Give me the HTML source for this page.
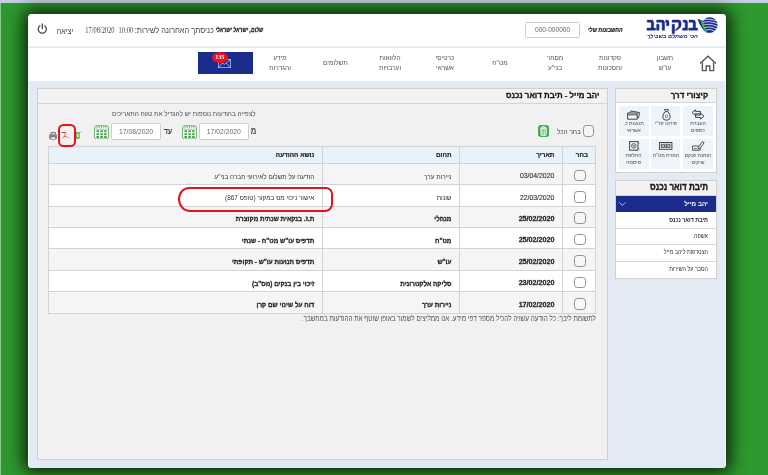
<!DOCTYPE html>
<html lang="he">
<head>
<meta charset="utf-8">
<title>יהב מייל</title>
<style>
*{box-sizing:border-box;margin:0;padding:0}
html,body{width:768px;height:475px;overflow:hidden}
body{background:#2e992e;font-family:"Liberation Sans",sans-serif;color:#333;position:relative}
.abs{position:absolute}
.topstrip{left:0;top:0;width:768px;height:3px;background:#c5d0e2}
.cardbg{left:28.4px;top:13.6px;width:697.2px;height:454.5px;background:#f3f6fa;border-radius:3.5px;box-shadow:0 0 17px 3.6px rgba(0,0,0,.84)}
.edge{left:0;top:3px;width:1px;height:472px;background:rgba(255,255,255,.45)}
.card{left:29px;top:14px;width:696px;height:453.6px;background:#e4eaf3;border-radius:3px;overflow:hidden;will-change:transform}
.hdr{left:0;top:0;width:696px;height:33px;background:#fff;border-bottom:1px solid #ecf1f7}
.nav{left:0;top:34px;width:696px;height:32.6px;background:#fff}
.t{position:absolute;white-space:nowrap;line-height:1}
.r{direction:rtl;text-align:right}
.c{text-align:center}
.navi{position:absolute;top:38.8px;font-size:6.5px;line-height:9.9px;color:#555;text-align:center;direction:rtl;width:60px;margin-left:-30px}
.panel{position:absolute;background:#f1f1f1;border:1px solid #cfcfcf}
.ptitle{position:absolute;left:0;top:0;right:0;height:14.3px;border-bottom:1px solid #d4d4d4;background:#f2f2f2;font-weight:bold;font-size:7.9px;line-height:14.2px;direction:rtl;text-align:right;padding-right:7.6px;color:#1a1a1a;-webkit-text-stroke:0.33px #1a1a1a}
.tile{position:absolute;background:#edf5fa;width:30px;height:30px}
.tile span{position:absolute;left:-4px;right:-4px;top:13.7px;font-size:5.14px;line-height:7px;color:#505050;text-align:center;direction:rtl}
.mrow{position:absolute;left:0;right:0;height:16.8px;background:#fff;border-top:1px solid #d8d8d8;font-size:5.4px;line-height:15px;direction:rtl;text-align:right;padding-right:7.7px;color:#2c2c2c}
table.tb{position:absolute;border-collapse:collapse;direction:rtl;table-layout:fixed}
.tb td,.tb th{border:1px solid #d3d3d3;font-size:6.38px;color:#333;text-align:right;padding:5.6px 7.5px 0 0;vertical-align:middle;white-space:nowrap;overflow:hidden;line-height:1}
.tb td.d{font-size:6.9px;color:#333;-webkit-text-stroke:0.12px #333}
.tb td.c,.tb th.c{padding:2.8px 0 0 2.4px;text-align:center}
.tb th{background:#e9f2f9;height:16.6px;font-weight:bold;color:#222;-webkit-text-stroke:0.2px #222;font-size:6.38px;padding-top:0.4px}
.tb td{height:21.4px}
.tb td.d .s{transform:none}
.s{display:inline-block;transform:scaleY(1.15);transform-origin:50% 55%}
.tb tr.g td{background:#f5f5f5}
.tb tr.w td{background:#fff}
.tb tr.b td{font-weight:bold;-webkit-text-stroke:0.28px #2a2a2a;font-size:6.36px;color:#2a2a2a}
.tb tr.b td.d{font-size:7.15px}
.cb{display:inline-block;width:11.6px;height:11.6px;border:1px solid #909090;border-radius:3.4px;background:rgba(255,255,255,.25);vertical-align:middle}
.inp{position:absolute;background:#fff;border:1px solid #cdcdcd;border-radius:1.5px;font-size:6.8px;color:#6a6a6a;text-align:center;line-height:15px;height:16px}
</style>
</head>
<body>
<div class="abs topstrip"></div>
<div class="abs edge"></div>
<div class="abs cardbg"></div>
<div class="abs card">
  <!-- header -->
  <div class="abs hdr"></div>
  <div class="abs nav"></div>

  <!-- logo -->
  <svg class="abs" style="left:617px;top:2px" width="73" height="26" viewBox="0 0 73 26">
    <g fill="#1b2c8c" stroke="#1b2c8c" stroke-width="0.4" stroke-linejoin="round" transform="translate(0.9,4)">
      <!-- bet (left, last letter) -->
      <path d="M0.3,0 H4.4 Q6.8,0 6.8,2.4 V8 H8.6 V10.3 H0 V8 H4.3 V3 Q4.3,2.3 3.6,2.3 H0.3 Z"/>
      <!-- he -->
      <g transform="translate(9.7,0)"><path d="M0,0 H5.6 Q8,0 8,2.4 V10.3 H5.5 V3 Q5.5,2.3 4.8,2.3 H0 Z"/><path d="M0,4.3 H2.5 V10.3 H0 Z"/></g>
      <!-- yod -->
      <g transform="translate(18.8,0)"><path d="M0,0 H1.2 Q3.3,0 3.3,2.1 V5.7 H0.8 V2.9 Q0.8,2.3 0.2,2.3 H0 Z"/></g>
      <!-- qof -->
      <g transform="translate(25.2,0)"><path d="M0,0 H6.6 Q9,0 9,2.4 V5.4 Q9,7.2 7.6,8 L4.6,10.3 H2.9 L6,6.9 Q6.5,6.4 6.5,5.6 V3 Q6.5,2.3 5.8,2.3 H0 Z"/><path d="M0,4.3 H2.5 V13.6 H0 Z"/></g>
      <!-- nun -->
      <g transform="translate(35.7,0)"><path d="M0.5,0 H2.7 Q5,0 5,2.3 V10.3 H0 V8 H2.5 V2.9 Q2.5,2.3 1.9,2.3 H0.5 Z"/></g>
      <!-- bet -->
      <g transform="translate(41.8,0)"><path d="M0.3,0 H4.5 Q6.9,0 6.9,2.4 V8 H8.9 V10.3 H0 V8 H4.4 V3 Q4.4,2.3 3.7,2.3 H0.3 Z"/></g>
    </g>
    <!-- globe -->
    <g>
      <circle cx="63.7" cy="9.1" r="7.8" fill="#1b2c8c"/>
      <path d="M51.5 2.7 L59 5.4 L61.6 17 Q54.6 13 51.5 2.7Z" fill="#1b2c8c"/>
      <path d="M54.2 3.8 L57 4.9 Q57.8 11 61.6 16.8 L59.2 15.9 Q55.4 10.6 54.2 3.8Z" fill="#35ad4e"/>
      <g stroke="#fff" stroke-width="0.75" fill="none">
        <path d="M56.6 4.2 Q62 2 70 4.8"/>
        <path d="M57 6.6 Q62.6 4.4 71.2 7.6"/>
        <path d="M57.6 9.1 Q63 7 71.5 10.4"/>
        <path d="M58.4 11.6 Q63.4 9.8 70.8 13"/>
        <path d="M59.6 14 Q63.8 12.4 69.4 15.2"/>
      </g>
    </g>
  </svg>
  <div class="t" id="sub" style="left:618px;top:19.9px;font-size:5.6px;font-weight:bold;font-style:italic;color:#1b2c8c;direction:rtl">הכי משתלם בשבילך</div>

  <div class="t" id="h1" style="left:559px;top:13.6px;transform:scaleY(1.22);-webkit-text-stroke:0.2px #222;font-size:5.3px;font-weight:bold;font-style:italic;color:#222;direction:rtl">החשבונות שלי</div>
  <div class="inp" style="left:496.2px;top:8.3px;width:54.8px;height:15.3px;line-height:14px;font-size:6.6px;color:#666">000-000000</div>

  <!-- header left text -->
  <div class="t" id="h2" style="left:186.5px;top:14.1px;transform:scaleY(1.28);-webkit-text-stroke:0.2px #222;font-size:5.1px;font-weight:bold;font-style:italic;color:#222;direction:rtl">שלום, ישראל ישראלי</div>
  <div class="t" id="h3" style="left:105.8px;top:13.1px;transform:scaleY(1.15);font-size:7.47px;color:#444;direction:rtl">כניסתך האחרונה לשירות:</div>
  <div class="t" id="h4" style="left:56.3px;top:13.6px;transform:scaleY(1.15);font-size:6.4px;color:#444;font-family:'Liberation Serif',serif">17/08/2020</div><div class="t" id="h5" style="left:89.5px;top:13.6px;transform:scaleY(1.15);font-size:6.4px;color:#444;font-family:'Liberation Serif',serif">10:00</div>
  <div class="t" id="h6" style="left:27.7px;top:13.2px;transform:scaleY(1.22);font-size:7.2px;color:#444;direction:rtl">יציאה</div>
  <svg class="abs" style="left:8.3px;top:9.4px" width="10.6" height="11.4" viewBox="0 0 12 12.9" fill="none" stroke="#4a4a4a" stroke-width="1.5" stroke-linecap="round">
    <path d="M3.3 3.2 A4.6 4.6 0 1 0 8.7 3.2"/><path d="M6 1 V6.2"/>
  </svg>

  <!-- nav -->
  <svg class="abs" style="left:670px;top:40.5px" width="18" height="17" viewBox="0 0 18 17" fill="none" stroke="#555" stroke-width="1.35" stroke-linejoin="miter">
    <path d="M1 8.6 L9 1.2 L17 8.6"/>
    <path d="M3.4 7.6 V15.6 H7.2 V11 H10.8 V15.6 H14.6 V7.6"/>
  </svg>
  <div class="navi" style="left:636px">חשבון<br>עו"ש</div>
  <div class="navi" style="left:581px">פקדונות<br>וחסכונות</div>
  <div class="navi" style="left:526px">מסחר<br>בני"ע</div>
  <div class="navi" style="left:471px;top:43.8px">מט"ח</div>
  <div class="navi" style="left:416px">כרטיסי<br>אשראי</div>
  <div class="navi" style="left:361px">הלוואות<br>וערבויות</div>
  <div class="navi" style="left:306.4px;top:43.8px">תשלומים</div>
  <div class="navi" style="left:251px">מידע<br>והגדרות</div>
  <div class="abs" style="left:169px;top:37.9px;width:54.7px;height:21.9px;background:#1b2c8c"></div>
  <svg class="abs" style="left:189.1px;top:44.9px" width="12.8" height="9.1" viewBox="0 0 12.8 9.1" fill="none" stroke="rgba(255,255,255,.78)" stroke-width="0.7">
    <rect x="0.4" y="0.4" width="12" height="8.3"/><path d="M0.4 0.7 L6.4 5.4 L12.4 0.7"/><path d="M0.4 8.6 L4.6 4 M12.4 8.6 L8.2 4"/>
  </svg>
  <div class="abs" style="left:183px;top:38.3px;width:15.6px;height:10.5px;border-radius:50%;background:#ea0f22;color:#fff;font-family:'Liberation Serif',serif;font-size:6px;font-weight:bold;line-height:10.4px;text-align:center;letter-spacing:0.1px">135</div>

  <!-- main panel -->
  <div class="panel" style="left:7.8px;top:74px;width:571.2px;height:371.5px">
    <div class="ptitle" style="height:14.6px;line-height:14.6px">יהב מייל - תיבת דואר נכנס</div>
    <!-- hint -->
    <div class="t r" style="left:74.2px;top:21.7px;font-size:6.42px;color:#505050;transform:scaleY(1.16)">לצפייה בהודעות נוספות יש להגדיל את טווח התאריכים</div>
    <!-- select all -->
    <span class="cb abs" style="left:545px;top:36.3px;width:11.6px;height:11.6px"></span>
    <div class="t r" style="left:519.2px;top:39.5px;font-size:6.4px;color:#444">בחר הכל</div>
    <svg class="abs" style="left:500.4px;top:36.2px" width="11.2" height="12" viewBox="0 0 11.2 12">
      <rect x="0.4" y="0.4" width="10.4" height="11.2" rx="2.4" fill="#3dab44" stroke="#2f9637" stroke-width="0.7"/>
      <path d="M2.7 3.7 H8.5 L8.1 10.3 H3.1 Z" fill="#7cc781" stroke="#fff" stroke-width="0.9" stroke-linejoin="round"/>
      <path d="M2 2.9 H9.2 M4.4 2.8 V1.6 H6.8 V2.8" stroke="#fff" stroke-width="0.85" fill="none"/>
      <path d="M4.7 4.8 V9.4 M6.5 4.8 V9.4" stroke="#fff" stroke-width="0.6"/>
    </svg>
    <!-- date range -->
    <div class="t r" style="left:212.9px;top:38.6px;font-size:7.6px;font-weight:bold;color:#444;transform:scaleY(1.2)">מ</div>
    <div class="inp" style="left:161.3px;top:34.4px;width:49.5px;height:16.7px">17/02/2020</div>
    <svg class="abs cal" style="left:143.9px;top:36.1px" width="15" height="14.4" preserveAspectRatio="none" viewBox="0 0 14.4 14.2">
      <use href="#calicon"/>
    </svg>
    <div class="t r" style="left:125.9px;top:38.6px;font-size:7.2px;font-weight:bold;color:#444;transform:scaleY(1.2)">עד</div>
    <div class="inp" style="left:73.5px;top:34.4px;width:49.5px;height:16.7px">17/08/2020</div>
    <svg class="abs cal" style="left:56.5px;top:36.1px" width="15" height="14.4" preserveAspectRatio="none" viewBox="0 0 14.4 14.2">
      <defs><g id="calicon">
        <rect x="0.45" y="0.9" width="13.5" height="12.85" rx="2" fill="#fbfefb" stroke="#5aac5d" stroke-width="0.85"/>
        <path d="M0.8 4.3 H13.6" stroke="#6cb56e" stroke-width="0.6"/>
        <path d="M2.9 0.1 V3.3 M5.05 0.1 V3.3 M7.2 0.1 V3.3 M9.35 0.1 V3.3 M11.5 0.1 V3.3" stroke="#5aac5d" stroke-width="0.75"/>
        <path d="M3.55 5.2 V13 M7.25 5.2 V13 M10.95 5.2 V13" stroke="#3f9d44" stroke-width="2.3" stroke-dasharray="2 0.85"/>
      </g></defs>
      <use href="#calicon"/>
    </svg>
    <!-- small export icons -->
    <svg class="abs" style="left:38.3px;top:42.4px" width="6.4" height="8" viewBox="0 0 6.4 8">
      <rect x="2.4" y="1.6" width="3.4" height="5.6" fill="#fafafa" stroke="#ddd" stroke-width="0.4"/>
      <rect x="0.3" y="1.4" width="3" height="6" fill="#6db653" stroke="#4c9a3c" stroke-width="0.5"/>
      <rect x="1" y="2.8" width="1.5" height="3.2" fill="#e4f1de"/>
      <path d="M4.6 0.3 L5.8 1.8" stroke="#666" stroke-width="0.55"/>
    </svg>
    <svg class="abs" style="left:23.6px;top:42.4px" width="8" height="8.2" viewBox="0 0 8 8.2" fill="none">
      <path d="M0.4 1.5 H5.2" stroke="#e03a40" stroke-width="1.1"/>
      <path d="M3.9 2.4 Q4.6 4.6 2 7.4 M2.6 5.6 Q5 4.8 7.4 6.8" stroke="#dc4a50" stroke-width="0.75"/>
      <path d="M5.2 2.2 V4.2" stroke="#999" stroke-width="0.5"/>
    </svg>
    <svg class="abs" style="left:11.2px;top:42.8px" width="8.4" height="8.2" viewBox="0 0 8.6 8.2">
      <path d="M2 2.6 V0.5 H6.6 V2.6" fill="#ddd" stroke="#5a5a5a" stroke-width="0.8"/>
      <rect x="0.4" y="2.6" width="7.8" height="4" rx="0.7" fill="#8c8c8c" stroke="#666" stroke-width="0.5"/>
      <rect x="1.9" y="5" width="4.8" height="2.8" fill="#f4f4f4" stroke="#5a5a5a" stroke-width="0.6"/>
    </svg>
    <!-- table -->
    <table class="tb" style="left:10.5px;top:57.3px;width:546.8px">
      <colgroup><col style="width:33.2px"><col style="width:102.9px"><col style="width:137.2px"><col style="width:273.5px"></colgroup>
      <tr><th style="padding-right:7px"><span class="s">בחר</span></th><th><span class="s">תאריך</span></th><th><span class="s">תחום</span></th><th><span class="s">נושא ההודעה</span></th></tr>
      <tr class="g"><td class="c"><span class="cb"></span></td><td class="d"><span class="s">03/04/2020</span></td><td><span class="s">ניירות ערך</span></td><td><span class="s">הודעה על תשלום לאירועי חברה בני"ע</span></td></tr>
      <tr class="w"><td class="c"><span class="cb"></span></td><td class="d"><span class="s">22/03/2020</span></td><td><span class="s">שונות</span></td><td><span class="s">אישור ניכוי מס במקור (טופס 867)</span></td></tr>
      <tr class="g b"><td class="c"><span class="cb"></span></td><td class="d"><span class="s">25/02/2020</span></td><td><span class="s">מנהלי</span></td><td><span class="s">ת.ז. בנקאית שנתית מקוצרת</span></td></tr>
      <tr class="w b"><td class="c"><span class="cb"></span></td><td class="d"><span class="s">25/02/2020</span></td><td><span class="s">מט"ח</span></td><td><span class="s">תדפיס עו"ש מט"ח - שנתי</span></td></tr>
      <tr class="g b"><td class="c"><span class="cb"></span></td><td class="d"><span class="s">25/02/2020</span></td><td><span class="s">עו"ש</span></td><td><span class="s">תדפיס תנועות עו"ש - תקופתי</span></td></tr>
      <tr class="w b"><td class="c"><span class="cb"></span></td><td class="d"><span class="s">23/02/2020</span></td><td><span class="s">סליקה אלקטרונית</span></td><td><span class="s">זיכוי בין בנקים (מס"ב)</span></td></tr>
      <tr class="g b"><td class="c"><span class="cb"></span></td><td class="d"><span class="s">17/02/2020</span></td><td><span class="s">ניירות ערך</span></td><td><span class="s">דוח על שינוי שם קרן</span></td></tr>
    </table>
    <div class="t r" style="right:11px;top:226.6px;font-size:6.37px;color:#555;transform:scaleY(1.18)">לתשומת ליבך: כל הודעה עשויה להכיל מספר דפי מידע. אנו ממליצים לשמור באופן שוטף את ההודעות במחשבך.</div>
    <!-- red annotations -->
    <div class="abs" style="left:20.6px;top:34.7px;width:17.5px;height:23.6px;border:2.9px solid #e4141f;border-radius:5.5px"></div>
    <div class="abs" style="left:139.9px;top:97.9px;width:155.6px;height:25.2px;border:2.6px solid #e4141f;border-radius:11px 7px 8px 12px/12px 7px 8px 13px"></div>
  </div>

  <!-- sidebar panel 1 -->
  <div class="panel" style="left:586px;top:73.9px;width:101.7px;height:84.8px;background:#fff">
    <div class="ptitle">קיצורי דרך</div>
    <div class="tile" style="left:66.9px;top:17.3px;width:30.2px;height:30.3px">
      <svg class="abs" style="left:8px;top:3px" width="14" height="11" viewBox="0 0 14 11" fill="none" stroke="#444" stroke-width="1" stroke-linejoin="round">
        <path d="M1 3.6 L4.4 0.8 V2.4 H9.4 V4.8 H4.4 V6.4 Z"/>
        <path d="M13 7.2 L9.6 4.4 V6 H4.6 V8.4 H9.6 V10 Z" fill="#eef5fa"/>
      </svg>
      <span>העברת<br>כספים</span></div>
    <div class="tile" style="left:35.3px;top:17.3px;width:29.1px;height:30.3px">
      <svg class="abs" style="left:10.5px;top:2.4px" width="9" height="12" viewBox="0 0 9 12" fill="none" stroke="#444" stroke-width="1">
        <path d="M2.6 0.6 H6.4 L5.6 2.6 H3.4 Z"/>
        <path d="M3.2 2.8 Q0.6 4.6 0.8 8.4 Q1 11.2 4.5 11.2 Q8 11.2 8.2 8.4 Q8.4 4.6 5.8 2.8"/>
        <path d="M3.4 6 H5.6 V8.6 H3.4 Z" stroke-width="0.5"/>
      </svg>
      <span>פירוט פר"י</span></div>
    <div class="tile" style="left:2.75px;top:17.3px;width:29.85px;height:30.3px">
      <svg class="abs" style="left:8px;top:3.4px" width="14" height="10" viewBox="0 0 14 10" fill="none" stroke="#444" stroke-width="1" stroke-linejoin="round">
        <rect x="0.6" y="3" width="9.6" height="6.2"/>
        <path d="M2.6 3 L4 1 L12.6 2.6 L11.6 7.8 L10.2 7.6"/>
        <path d="M0.6 4.8 H10.2"/>
      </svg>
      <span>תנועות כ.<br>אשראי</span></div>
    <div class="tile" style="left:66.9px;top:50.2px;width:30.2px;height:29.9px">
      <svg class="abs" style="left:9.6px;top:2.4px" width="13" height="10" viewBox="0 0 13 10" fill="none" stroke="#444" stroke-width="0.9" stroke-linejoin="round">
        <rect x="0.6" y="5" width="7.6" height="4.2"/>
        <path d="M2 7.6 H4.8" stroke-width="0.7"/>
        <path d="M6.2 6.4 L10.2 0.9 Q11.6 0.4 12 1.8 L8.4 7 L6 7.8 Z" fill="#edf5fa"/>
      </svg>
      <span style="top:12.8px">הזמנת פנקס<br>שיקים</span></div>
    <div class="tile" style="left:35.3px;top:50.2px;width:29.1px;height:29.9px">
      <svg class="abs" style="left:8.2px;top:2.9px" width="13.4" height="7.8" viewBox="0 0 13.4 7.8">
        <rect x="0.5" y="0.5" width="12.4" height="6.8" fill="#f2f6f8" stroke="#444" stroke-width="1"/>
        <rect x="1.9" y="1.8" width="9.6" height="4.2" fill="#555"/>
        <path d="M3 2.4 L5.2 5.4 M5.2 2.4 L3 5.4 M6.7 2.2 V5.6 M8.4 2.4 L10.4 5.4 M10.4 2.4 L8.4 5.4" stroke="#f2f6f8" stroke-width="0.7" fill="none"/>
      </svg>
      <span style="top:12.8px">המרת מט"ח</span></div>
    <div class="tile" style="left:2.75px;top:50.2px;width:29.85px;height:29.9px">
      <svg class="abs" style="left:10.2px;top:2.2px" width="10.6" height="10" viewBox="0 0 10.6 10" fill="none" stroke="#444">
        <rect x="0.6" y="0.6" width="8.4" height="8.6" stroke-width="1"/>
        <circle cx="4.8" cy="4.9" r="2.3" stroke-width="0.8"/>
        <circle cx="4.8" cy="4.9" r="0.8" stroke-width="0.7"/>
        <path d="M9 2 H10.2 M9 7.6 H10.2" stroke-width="0.9"/>
      </svg>
      <span style="top:12.8px">החלפת<br>סיסמה</span></div>
  </div>
  <!-- sidebar panel 2 -->
  <div class="panel" style="left:586px;top:166.3px;width:101.7px;height:98.3px;background:#fff">
    <div class="ptitle" style="font-size:8.1px"><span class="s" style="transform:scaleY(1.2)">תיבת דואר נכנס</span></div>
    <div class="mrow" style="top:14.3px;height:16.2px;background:#1b2c8c;border-top:0;color:#fff;font-weight:bold;font-size:6.3px;line-height:16px">יהב מייל
      <svg class="abs" style="left:3.2px;top:6.2px" width="6.8" height="4" viewBox="0 0 7 4.2" fill="none" stroke="#fff" stroke-width="0.7"><path d="M0.4 0.4 L3.5 3.6 L6.6 0.4"/></svg>
    </div>
    <div class="mrow" style="top:30.5px;border-top:0;font-weight:bold;color:#1a1a1a;line-height:16px"><span class="s" style="transform:scaleY(1.2)">תיבת דואר נכנס</span></div>
    <div class="mrow" style="top:46.5px"><span class="s" style="transform:scaleY(1.2)">אשפה</span></div>
    <div class="mrow" style="top:62.7px"><span class="s" style="transform:scaleY(1.2)">הצטרפות ליהב מייל</span></div>
    <div class="mrow" style="top:79.4px;height:16.9px"><span class="s" style="transform:scaleY(1.2)">הסבר על השירות</span></div>
  </div>
</div>
</body>
</html>
